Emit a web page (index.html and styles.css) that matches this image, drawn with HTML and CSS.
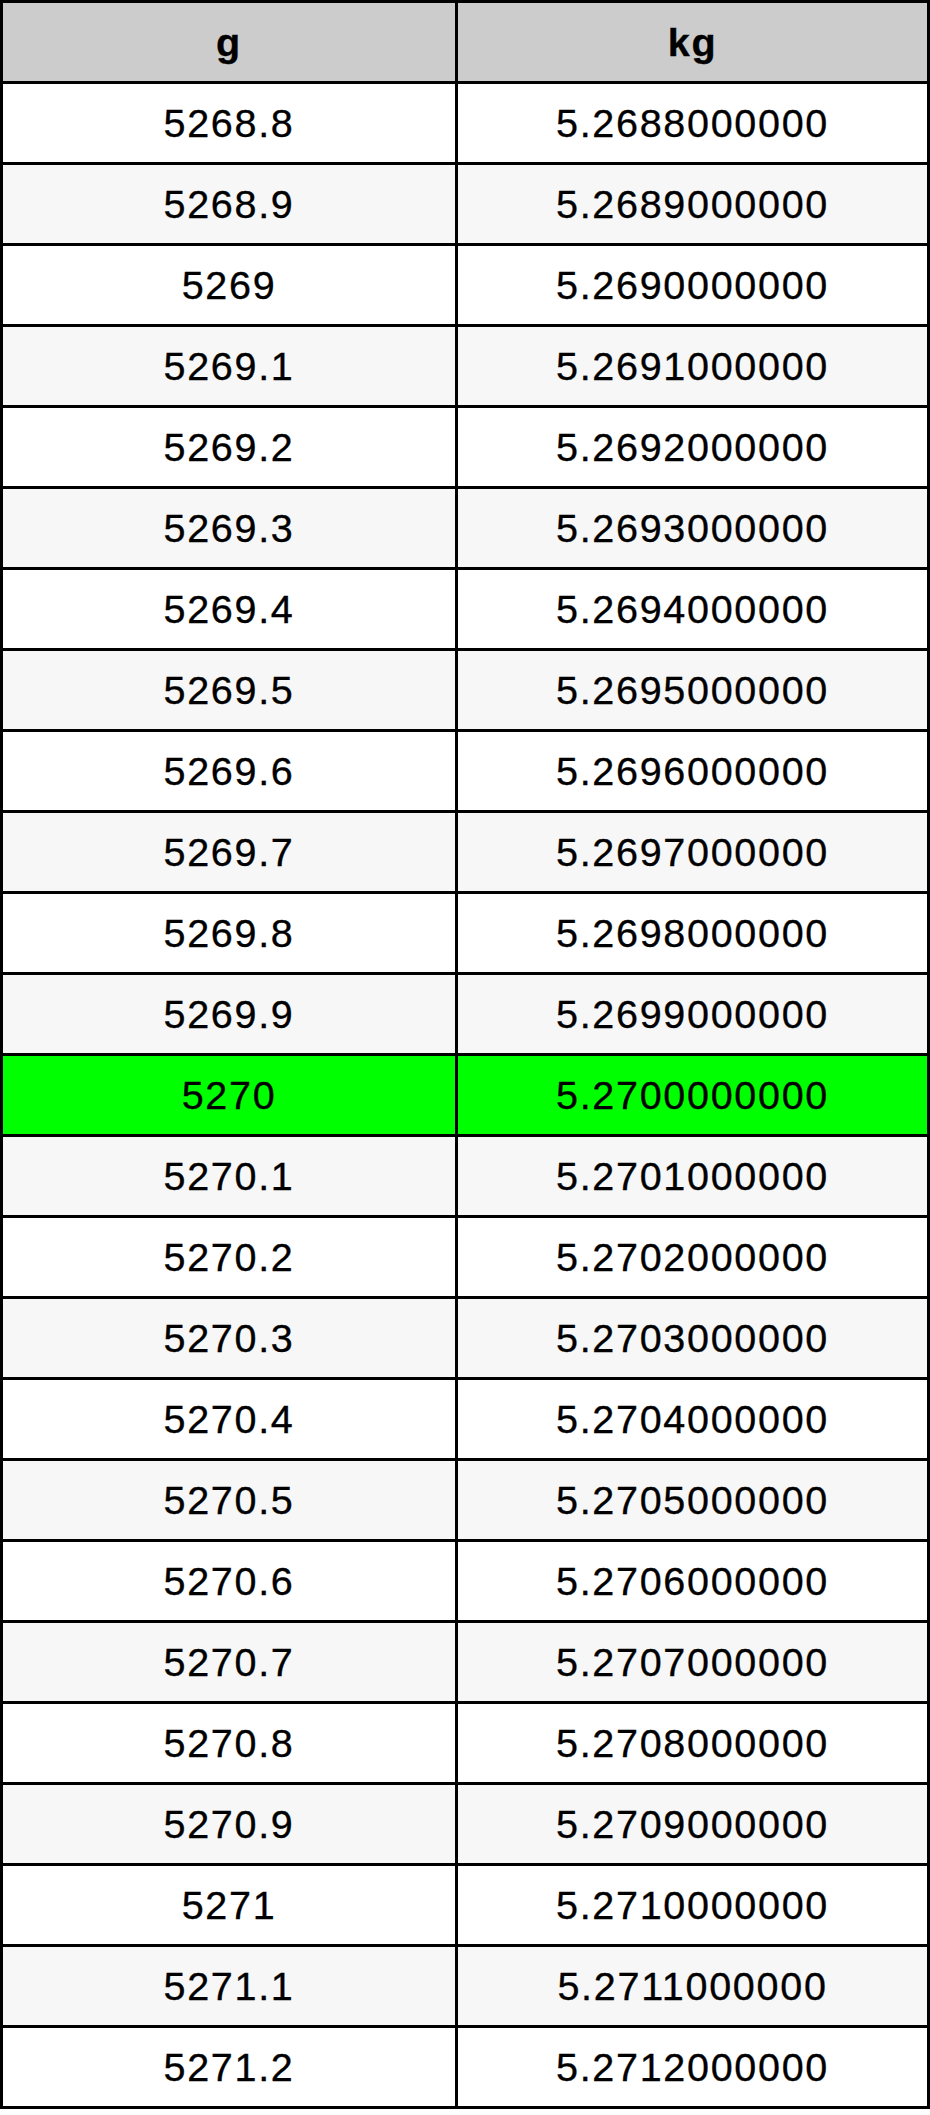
FILE: index.html
```html
<!DOCTYPE html>
<html>
<head>
<meta charset="utf-8">
<link rel="stylesheet" href="styles.css">
</head>
<body>
<table class="conv">
  <colgroup><col class="c1"><col class="c2"></colgroup>
  <thead>
    <tr><th>g</th><th>kg</th></tr>
  </thead>
  <tbody>
    <tr><td>5268.8</td><td>5.2688000000</td></tr>
    <tr><td>5268.9</td><td>5.2689000000</td></tr>
    <tr><td>5269</td><td>5.2690000000</td></tr>
    <tr><td>5269.1</td><td>5.2691000000</td></tr>
    <tr><td>5269.2</td><td>5.2692000000</td></tr>
    <tr><td>5269.3</td><td>5.2693000000</td></tr>
    <tr><td>5269.4</td><td>5.2694000000</td></tr>
    <tr><td>5269.5</td><td>5.2695000000</td></tr>
    <tr><td>5269.6</td><td>5.2696000000</td></tr>
    <tr><td>5269.7</td><td>5.2697000000</td></tr>
    <tr><td>5269.8</td><td>5.2698000000</td></tr>
    <tr><td>5269.9</td><td>5.2699000000</td></tr>
    <tr class="hl"><td>5270</td><td>5.2700000000</td></tr>
    <tr><td>5270.1</td><td>5.2701000000</td></tr>
    <tr><td>5270.2</td><td>5.2702000000</td></tr>
    <tr><td>5270.3</td><td>5.2703000000</td></tr>
    <tr><td>5270.4</td><td>5.2704000000</td></tr>
    <tr><td>5270.5</td><td>5.2705000000</td></tr>
    <tr><td>5270.6</td><td>5.2706000000</td></tr>
    <tr><td>5270.7</td><td>5.2707000000</td></tr>
    <tr><td>5270.8</td><td>5.2708000000</td></tr>
    <tr><td>5270.9</td><td>5.2709000000</td></tr>
    <tr><td>5271</td><td>5.2710000000</td></tr>
    <tr><td>5271.1</td><td>5.2711000000</td></tr>
    <tr><td>5271.2</td><td>5.2712000000</td></tr>
  </tbody>
</table>
</body>
</html>
```

FILE: styles.css
```css
html, body {
  margin: 0;
  padding: 0;
  background: #ffffff;
}

.conv {
  width: 930px;
  table-layout: fixed;
  border-collapse: separate;
  border-spacing: 3px;
  background: #000000;
  font-family: "Liberation Sans", Arial, sans-serif;
  font-size: 39.5px;
  letter-spacing: 1.7px;
  color: #000000;
  -webkit-text-stroke: 0.35px #000000;
}

.c1 { width: 452px; }
.c2 { width: 469px; }

.conv th,
.conv td {
  height: 78px;
  padding: 0;
  text-align: center;
  vertical-align: middle;
  background: #ffffff;
}

.conv th {
  background: #cccccc;
  font-weight: bold;
}

.conv tbody tr:nth-child(even) td {
  background: #f7f7f7;
}

.conv tbody tr.hl td {
  background: #00ff00;
}
```
